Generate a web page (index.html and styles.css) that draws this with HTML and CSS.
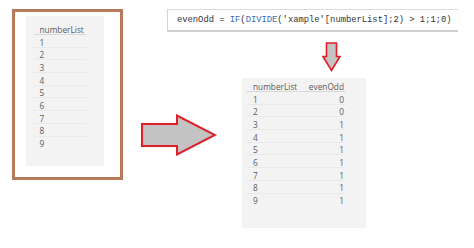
FILE: index.html
```html
<!DOCTYPE html>
<html>
<head>
<meta charset="utf-8">
<link rel="stylesheet" href="styles.css">
</head>
<body>
<div class="page">
  <div class="frame">
    <div class="table t1">
      <div class="row head"><span>numberList</span></div>
      <div class="row"><span>1</span></div>
      <div class="row"><span>2</span></div>
      <div class="row"><span>3</span></div>
      <div class="row"><span>4</span></div>
      <div class="row"><span>5</span></div>
      <div class="row"><span>6</span></div>
      <div class="row"><span>7</span></div>
      <div class="row"><span>8</span></div>
      <div class="row last"><span>9</span></div>
    </div>
  </div>
  <div class="side">
    <div class="formula">evenOdd = <span class="kw">IF</span>(<span class="kw">DIVIDE</span>('xample'[numberList];2) &gt; 1;1;0)</div>
    <div class="lower">
      <svg class="arrow-right" width="76" height="42" viewBox="0 0 76 42">
        <polygon points="1,10 36,10 36,1.5 74,21 36,40.5 36,32 1,32" fill="#c3c3c3" stroke="#e01e2a" stroke-width="2" stroke-linejoin="miter"/>
      </svg>
      <div class="result">
        <svg class="arrow-down" width="19" height="30" viewBox="0 0 19 30">
          <polygon points="4.5,1 14.5,1 14.5,14.5 18,14.5 9.5,28.5 1,14.5 4.5,14.5" fill="#c3c3c3" stroke="#e01e2a" stroke-width="1.6"/>
        </svg>
        <div class="table t2">
          <div class="row head"><span>numberList</span><span>evenOdd</span></div>
          <div class="row"><span>1</span><span>0</span></div>
          <div class="row"><span>2</span><span>0</span></div>
          <div class="row"><span>3</span><span>1</span></div>
          <div class="row"><span>4</span><span>1</span></div>
          <div class="row"><span>5</span><span>1</span></div>
          <div class="row"><span>6</span><span>1</span></div>
          <div class="row"><span>7</span><span>1</span></div>
          <div class="row"><span>8</span><span>1</span></div>
          <div class="row last"><span>9</span><span>1</span></div>
        </div>
      </div>
    </div>
  </div>
</div>
</body>
</html>
```
FILE: styles.css
```css
html, body {
  margin: 0;
  padding: 0;
  background: #ffffff;
}
.page {
  display: flex;
  align-items: flex-start;
  padding: 9px 0 0 12px;
  font-family: "Open Sans", "Noto Sans", sans-serif;
  color: #5a5a5a;
}
.frame {
  box-sizing: border-box;
  width: 111px;
  height: 171px;
  border: 3.5px solid #b8795b;
  padding: 4px 0 0 10.5px;
}
.table {
  background: #f3f3f3;
  box-sizing: border-box;
  font-size: 8.3px;
}
.t1 {
  width: 78px;
  height: 150px;
  padding: 7px 0 0 8px;
}
.t1 .row {
  width: 52px;
}
.row {
  box-sizing: border-box;
  height: 12.7px;
  line-height: 12px;
  padding: 1.5px 2px 0 6px;
  border-bottom: 1px solid #e9e9e9;
  display: flex;
  justify-content: space-between;
}
.row.head {
  height: 12px;
  padding-top: 0.5px;
  border-bottom: 1px solid #d8d8d8;
}
.row.last {
  border-bottom: none;
}
.side {
  margin-left: 18px;
  display: flex;
  flex-direction: column;
}
.formula {
  box-sizing: border-box;
  margin-left: 26px;
  width: 291px;
  height: 23px;
  border-top: 1px solid #dcdcdc;
  border-left: 1px solid #d4d4d4;
  border-bottom: 2px solid #cfcfcf;
  padding-left: 9px;
  font-family: "Liberation Mono", "DejaVu Sans Mono", monospace;
  font-size: 8.8px;
  line-height: 20px;
  color: #333333;
  white-space: nowrap;
}
.kw {
  color: #3a6db5;
}
.lower {
  display: flex;
  align-items: flex-start;
}
.arrow-right {
  margin-top: 82px;
  display: block;
}
.result {
  margin-left: 25px;
  display: flex;
  flex-direction: column;
}
.arrow-down {
  display: block;
  margin: 10px 0 0 80px;
}
.t2 {
  margin-top: 6px;
  width: 124px;
  height: 150px;
  padding: 2px 0 0 4px;
}
.t2 .row {
  width: 100px;
  padding-left: 7px;
}
```
